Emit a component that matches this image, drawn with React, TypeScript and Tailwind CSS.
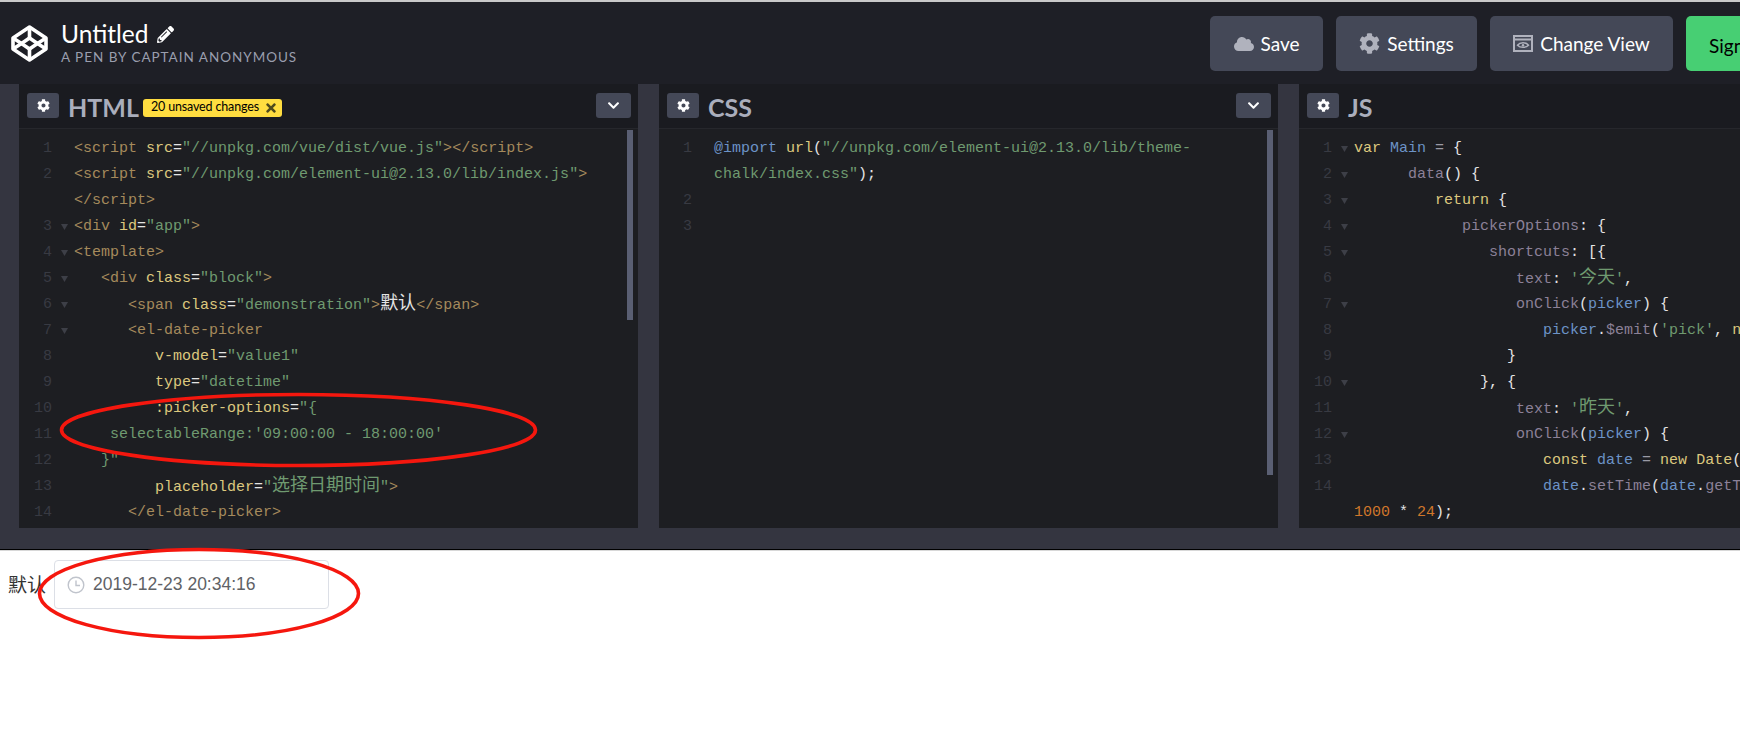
import React from "react";
import { FaCog, FaCloud, FaPencilAlt, FaChevronDown, FaTimes } from "react-icons/fa";

const T = "text-[#a58a5c]"; // tag
const A = "text-[#dcc87e]"; // attribute / keyword
const S = "text-[#6f9a70]"; // string
const W = "text-[#e4e4e4]"; // punctuation
const P = "text-[#8c8198]"; // property
const B = "text-[#6c93c7]"; // def
const N = "text-[#d0772b]"; // number
const G = "text-[#9a9aa5]"; // operator

type Tok = [string, string];
type Row = { n?: number; f?: boolean; i?: number; t: Tok[] };

function CJK({ children }: { children: React.ReactNode }) {
  return <span className="font-['Noto_Sans_CJK_SC'] text-[18px] leading-none">{children}</span>;
}

function Tokens({ t }: { t: Tok[] }) {
  return (
    <>
      {t.map(([s, c], k) => (
        <span key={k} className={c}>
          {/[\u4e00-\u9fff]/.test(s) ? <CJK>{s}</CJK> : s}
        </span>
      ))}
    </>
  );
}

const html: Row[] = [
  { n: 1, t: [["<script", T], [" ", W], ["src", A], ["=", W], ['"//unpkg.com/vue/dist/vue.js"', S], [">", T], ["</script>", T]] },
  { n: 2, t: [["<script", T], [" ", W], ["src", A], ["=", W], ['"//unpkg.com/element-ui@2.13.0/lib/index.js"', S], [">", T]] },
  { t: [["</script>", T]] },
  { n: 3, f: true, t: [["<div", T], [" ", W], ["id", A], ["=", W], ['"app"', S], [">", T]] },
  { n: 4, f: true, t: [["<template>", T]] },
  { n: 5, f: true, i: 3, t: [["<div", T], [" ", W], ["class", A], ["=", W], ['"block"', S], [">", T]] },
  { n: 6, f: true, i: 6, t: [["<span", T], [" ", W], ["class", A], ["=", W], ['"demonstration"', S], [">", T], ["默认", W], ["</span>", T]] },
  { n: 7, f: true, i: 6, t: [["<el-date-picker", T]] },
  { n: 8, i: 9, t: [["v-model", A], ["=", W], ['"value1"', S]] },
  { n: 9, i: 9, t: [["type", A], ["=", W], ['"datetime"', S]] },
  { n: 10, i: 9, t: [[":picker-options", A], ["=", W], ['"{', S]] },
  { n: 11, i: 4, t: [["selectableRange:'09:00:00 - 18:00:00'", S]] },
  { n: 12, i: 3, t: [['}"', S]] },
  { n: 13, i: 9, t: [["placeholder", A], ["=", W], ['"', S], ["选择日期时间", S], ['"', S], [">", T]] },
  { n: 14, i: 6, t: [["</el-date-picker>", T]] },
];

const css: Row[] = [
  { n: 1, t: [["@import", B], [" ", W], ["url", A], ["(", W], ['"//unpkg.com/element-ui@2.13.0/lib/theme-', S]] },
  { t: [['chalk/index.css"', S], [")", W], [";", W]] },
  { n: 2, t: [] },
  { n: 3, t: [] },
];

const js: Row[] = [
  { n: 1, f: true, t: [["var", A], [" ", W], ["Main", B], [" = ", G], ["{", W]] },
  { n: 2, f: true, i: 6, t: [["data", P], ["()", W], [" ", W], ["{", W]] },
  { n: 3, f: true, i: 9, t: [["return", A], [" ", W], ["{", W]] },
  { n: 4, f: true, i: 12, t: [["pickerOptions", P], [": ", W], ["{", W]] },
  { n: 5, f: true, i: 15, t: [["shortcuts", P], [": ", W], ["[{", W]] },
  { n: 6, i: 18, t: [["text", P], [": ", W], ["'", S], ["今天", S], ["'", S], [",", W]] },
  { n: 7, f: true, i: 18, t: [["onClick", P], ["(", W], ["picker", B], [")", W], [" ", W], ["{", W]] },
  { n: 8, i: 21, t: [["picker", B], [".", W], ["$emit", P], ["(", W], ["'pick'", S], [", ", W], ["new", A], [" ", W], ["Date", A], ["());", W]] },
  { n: 9, i: 17, t: [["}", W]] },
  { n: 10, f: true, i: 14, t: [["}, {", W]] },
  { n: 11, i: 18, t: [["text", P], [": ", W], ["'", S], ["昨天", S], ["'", S], [",", W]] },
  { n: 12, f: true, i: 18, t: [["onClick", P], ["(", W], ["picker", B], [")", W], [" ", W], ["{", W]] },
  { n: 13, i: 21, t: [["const", A], [" ", W], ["date", B], [" = ", G], ["new", A], [" ", W], ["Date", A], ["();", W]] },
  { n: 14, i: 21, t: [["date", B], [".", W], ["setTime", P], ["(", W], ["date", B], [".", W], ["getTime", P], ["() - ", W], ["3600", N], [" * ", W]] },
  { t: [["1000", N], [" * ", W], ["24", N], [")", W], [";", W]] },
];

function Code({ rows }: { rows: Row[] }) {
  return (
    <div className="pt-[7px] font-['Liberation_Mono'] text-[15px]">
      {rows.map((r, idx) => (
        <div key={idx} className="flex h-[26px] items-center whitespace-pre">
          <span className="w-[33px] shrink-0 text-right text-[#383a42]">{r.n ?? ""}</span>
          <span className="flex w-[22px] shrink-0 justify-start pl-[9px]">
            {r.f && (
              <svg width="7" height="6" viewBox="0 0 7 6">
                <polygon points="0,0 7,0 3.5,6" fill="#3d3f47" />
              </svg>
            )}
          </span>
          <span>
            {" ".repeat(r.i ?? 0)}
            <Tokens t={r.t} />
          </span>
        </div>
      ))}
    </div>
  );
}

function Editor({
  title,
  rows,
  badge,
  chevron,
  thumb,
  grow,
}: {
  title: string;
  rows: Row[];
  badge?: boolean;
  chevron?: boolean;
  thumb?: string;
  grow?: boolean;
}) {
  return (
    <div className={`relative flex flex-col overflow-hidden bg-[#1d1e22] ${grow ? "w-[441px]" : "w-[619px]"}`}>
      <div className="flex h-[45px] shrink-0 items-center border-b border-[#26272c] bg-[#1a1b20] pb-[1px]">
        <button className="ml-[8px] flex h-[25px] w-[32px] items-center justify-center rounded-[3px] bg-[#444857] text-white">
          <FaCog className="text-[13px]" />
        </button>
        <span className="ml-[9px] mt-[3px] font-['Lato'] text-[25px] font-bold leading-none text-[#aaaebc]">{title}</span>
        {badge && (
          <span className="ml-[4px] mt-[4px] flex h-[18px] w-[139px] items-center whitespace-nowrap rounded-[3px] bg-[#ffdd40] pl-[8px] font-['Lato'] text-[12.5px] leading-none tracking-[-0.15px] text-black">
            20 unsaved changes
            <FaTimes className="ml-[5px] text-[14px] text-[#4f4a1c]" />
          </span>
        )}
        {chevron && (
          <button className="ml-auto mr-[7px] flex h-[25px] w-[35px] items-center justify-center rounded-[3px] bg-[#444857] text-white">
            <FaChevronDown className="text-[13px]" />
          </button>
        )}
      </div>
      <Code rows={rows} />
      {thumb && <div className={`absolute right-[5px] top-[46px] w-[6px] bg-[#5a5f73] ${thumb}`} />}
    </div>
  );
}

function Gutter({ w }: { w: string }) {
  return <div className={`shrink-0 bg-[#343540] ${w}`} />;
}

function HeaderButton({ icon, label, w }: { icon: React.ReactNode; label: string; w: string }) {
  return (
    <button className={`flex h-[55px] items-center justify-center gap-[7px] rounded-[5px] bg-[#444857] font-['Lato'] text-[19px] text-white ${w}`}>
      {icon}
      <span className="pt-[2px]">{label}</span>
    </button>
  );
}

export default function App() {
  return (
    <div className="relative flex h-[755px] w-[1740px] flex-col overflow-hidden bg-white font-['Lato']">
      <div className="h-[3px] shrink-0 border-t-2 border-[#c9c9c9] bg-[#1e1f26]" />
      <header className="flex h-[81px] shrink-0 items-start bg-[#1e1f26]">
        <svg className="ml-[11px] mt-[22px]" width="37" height="37" viewBox="0 0 37 37" fill="none" stroke="white" strokeWidth="3.6" strokeLinejoin="round">
          <path d="M18.5 2 L35 13 V24 L18.5 35 L2 24 V13 Z" />
          <path d="M18.5 13 L26.5 18.5 L18.5 24 L10.5 18.5 Z" />
          <path d="M18.5 2 V13 M18.5 24 V35 M2 13 L10.5 18.5 M26.5 18.5 L35 13 M2 24 L10.5 18.5 M26.5 18.5 L35 24" />
        </svg>
        <div className="ml-[13px] mt-[17px] flex flex-col">
          <div className="flex h-[28px] items-center text-[24.5px] leading-none text-white">
            Untitled
            <FaPencilAlt className="ml-[9px] text-[17px]" />
          </div>
          <div className="mt-[1px] text-[13.5px] leading-[16px] tracking-[0.98px] text-[#9a9eae]">A PEN BY CAPTAIN ANONYMOUS</div>
        </div>
        <div className="ml-auto mt-[13px] flex gap-[13px]">
          <HeaderButton w="w-[113px]" label="Save" icon={<FaCloud className="text-[20px] text-[#b0b2bd]" />} />
          <HeaderButton w="w-[141px]" label="Settings" icon={<FaCog className="text-[21px] text-[#b0b2bd]" />} />
          <HeaderButton
            w="w-[183px]"
            label="Change View"
            icon={
              <svg width="20" height="17" viewBox="0 0 20 17" fill="none" stroke="#b0b2bd" strokeWidth="2">
                <rect x="1" y="1" width="18" height="15" />
                <path d="M1 4.5H19" />
                <path d="M4.5 10.2 C7 7 13 7 15.5 10.2 C13 13 7 13 4.5 10.2 Z" strokeWidth="1.5" />
                <circle cx="10" cy="10.2" r="1.2" fill="#b0b2bd" stroke="none" />
              </svg>
            }
          />
          <div className="h-[55px] w-[54px] overflow-hidden whitespace-nowrap rounded-l-[5px] bg-[#47cf73] pl-[23px] pt-[2px] text-[19px] leading-[55px] text-black">
            Sign Up
          </div>
        </div>
      </header>

      <div className="flex h-[444px] shrink-0 overflow-hidden">
        <Gutter w="w-[19px]" />
        <Editor title="HTML" rows={html} badge chevron thumb="h-[190px]" />
        <Gutter w="w-[21px]" />
        <Editor title="CSS" rows={css} chevron thumb="h-[345px]" />
        <Gutter w="w-[21px]" />
        <Editor title="JS" rows={js} grow />
      </div>

      <div className="h-[21px] shrink-0 bg-[#343540]" />
      <div className="h-[1px] shrink-0 bg-black" />
      <div className="h-[1px] shrink-0 bg-[#d8d8d8]" />

      <main className="flex items-start pl-[8px] pt-[9px]">
        <span className="mt-[11px] font-['Noto_Sans_CJK_SC'] text-[19px] leading-[26px] text-[#333333]">默认</span>
        <div className="ml-[8px] flex h-[49px] w-[275px] items-center rounded-[4px] border border-[#dcdfe6] bg-white pl-[12px]">
          <svg width="18" height="18" viewBox="0 0 18 18" fill="none" stroke="#c0c4cc" strokeWidth="1.4">
            <circle cx="9" cy="9" r="7.8" />
            <path d="M9 4.5V9.5H13" />
          </svg>
          <span className="ml-[8px] font-['Liberation_Sans'] text-[17.5px] text-[#606266]">2019-12-23 20:34:16</span>
        </div>
      </main>

      <svg className="pointer-events-none absolute left-0 top-0" width="1740" height="755" fill="none" stroke="#f5170e">
        <ellipse cx="298.5" cy="430" rx="237" ry="35.5" strokeWidth="3.6" />
        <ellipse cx="199" cy="593.5" rx="159.5" ry="44" strokeWidth="3.6" />
      </svg>
    </div>
  );
}
